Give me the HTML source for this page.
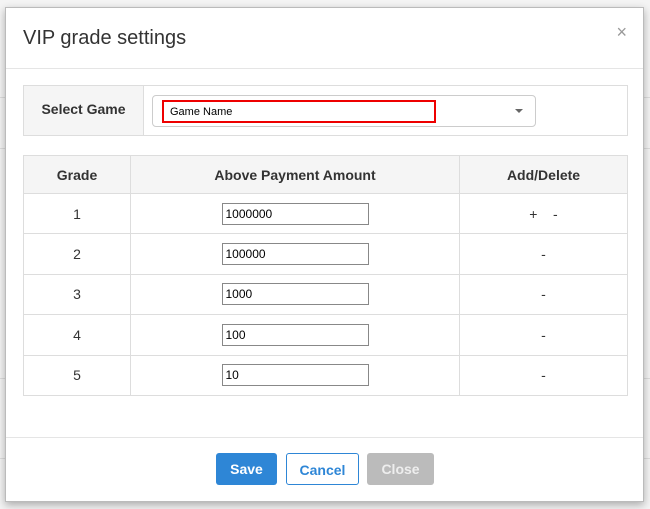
<!DOCTYPE html><html><head><style>
body{margin:0;width:650px;height:509px;background:#f4f4f4;font-family:"Liberation Sans",sans-serif;position:relative;overflow:hidden}
.bgl{position:absolute;left:0;width:650px;height:1px;background:#ddd}
.m{position:absolute;left:5px;top:7px;width:637px;height:493px;background:#fff;border:1px solid #bbb;box-shadow:0 3px 8px rgba(0,0,0,.3)}
.t{position:absolute;left:17px;top:19px;font-size:20px;color:#333}
.x{position:absolute;right:16px;top:14px;font-size:18px;color:#999}
.hl{position:absolute;left:0;right:0;top:60px;height:1px;background:#e5e5e5}
.fl{position:absolute;left:0;right:0;top:429px;height:1px;background:#e5e5e5}
.sel{position:absolute;left:17px;top:77px;width:603px;height:49px;border:1px solid #ddd}
.lab{position:absolute;left:0;top:0;width:119px;height:49px;background:#f5f5f5;border-right:1px solid #ddd;font-weight:bold;font-size:14px;color:#333;line-height:47px;text-align:center}
.sb{position:absolute;left:128px;top:9px;width:382px;height:30px;border:1px solid #ccc;border-radius:4px}
.red{position:absolute;left:9px;top:4px;border:2px solid #e00;font-size:11px;line-height:20px;padding-left:6px;box-sizing:border-box;width:274px;height:23px}
.car{position:absolute;right:12px;top:13px;border-left:4px solid transparent;border-right:4px solid transparent;border-top:4px solid #666}
table{position:absolute;left:17px;top:147px;border-collapse:collapse;width:605px;font-size:14px;color:#333}
td,th{border:1px solid #ddd;text-align:center;padding:0}
th{background:#f5f5f5;height:37px}
td{height:39.4px}
input{width:147px;height:22px;box-sizing:border-box;border:1px solid #888;font:12px "Liberation Sans",sans-serif;padding:2px 3px;margin-top:0px;vertical-align:top}
.b{position:absolute;top:445px;height:32px;font-weight:bold;font-size:14px;line-height:32px;text-align:center;border-radius:3px;box-sizing:border-box}
</style></head><body>
<div class="bgl" style="top:97px"></div><div class="bgl" style="top:148px"></div><div class="bgl" style="top:378px"></div><div class="bgl" style="top:458px"></div>
<div class="m">
<div class="t">VIP grade settings</div><div class="x">×</div>
<div class="hl"></div>
<div class="sel"><div class="lab">Select Game</div><div class="sb"><div class="red">Game Name</div><div class="car"></div></div></div>
<table>
<tr><th style="width:106px">Grade</th><th style="width:328px">Above Payment Amount</th><th>Add/Delete</th></tr>
<tr><td>1</td><td><input value="1000000"></td><td>+&nbsp;&nbsp;&nbsp;&nbsp;-</td></tr>
<tr><td>2</td><td><input value="100000"></td><td>-</td></tr>
<tr><td>3</td><td><input value="1000"></td><td>-</td></tr>
<tr><td>4</td><td><input value="100"></td><td>-</td></tr>
<tr><td>5</td><td><input value="10"></td><td>-</td></tr>
</table>
<div class="fl"></div>
<div class="b" style="left:210px;width:61px;background:#2e86d6;color:#fff">Save</div>
<div class="b" style="left:280px;width:73px;border:1px solid #2e86d6;color:#2e86d6;background:#fff">Cancel</div>
<div class="b" style="left:361px;width:67px;background:#bbb;color:#eee">Close</div>
</div>
</body></html>
